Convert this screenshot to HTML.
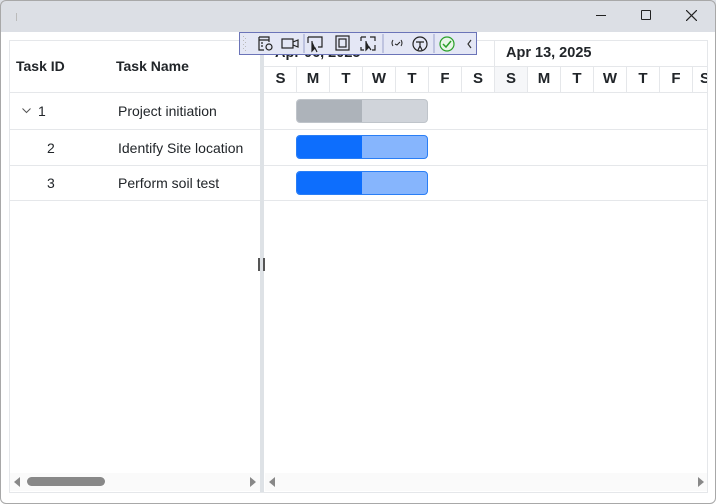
<!DOCTYPE html><html><head><style>
*{box-sizing:border-box;margin:0;padding:0}
body{width:716px;height:504px;background:#fff;font-family:"Segoe UI","Liberation Sans",sans-serif;position:relative;overflow:hidden;color:#212529}
.abs{position:absolute}
.tb{left:0;top:0;width:716px;height:32px;background:#dcdfe5}
.win{left:0;top:0;width:716px;height:504px;border:1px solid #a8a8a8;border-radius:6px;pointer-events:none}
.hl{background:#e5e7ea;height:1px}
.vl{background:#e5e7ea;width:1px}
.day{top:66px;width:33px;height:26px;text-align:center;font-weight:bold;font-size:15px;line-height:26px;border-left:1px solid #e5e7ea}
.cell{font-size:14px;line-height:20px}
.hd{font-weight:bold;font-size:14px}
</style></head><body>
<div class="abs tb"></div>
<div class="abs" style="left:16px;top:13px;width:1px;height:8px;background:#bbb"></div>
<div class="abs" style="left:596px;top:15px;width:10px;height:1px;background:#222"></div>
<div class="abs" style="left:641px;top:10px;width:10px;height:10px;border:1px solid #222;border-radius:1px"></div>
<svg class="abs" style="left:686px;top:10px" width="11" height="11"><path d="M0 0L11 11M11 0L0 11" stroke="#222" stroke-width="1.2"/></svg>

<div class="abs" style="left:9px;top:40px;width:699px;height:453px;border:1px solid #e5e7ea"></div>
<div class="abs" style="left:494px;top:66px;width:33px;height:26px;background:#f6f7f9"></div>
<div class="abs hl" style="left:10px;top:92px;width:697px"></div>
<div class="abs hl" style="left:264px;top:66px;width:443px"></div>
<div class="abs hl" style="left:10px;top:129px;width:697px"></div>
<div class="abs hl" style="left:10px;top:165px;width:697px"></div>
<div class="abs hl" style="left:10px;top:200px;width:697px"></div>
<div class="abs vl" style="left:494px;top:40px;height:26px"></div>
<div class="abs" style="left:260px;top:40px;width:4px;height:452px;background:#dee2e6"></div>
<div class="abs" style="left:258px;top:258px;width:2px;height:13px;background:#555"></div>
<div class="abs" style="left:263px;top:258px;width:2px;height:13px;background:#555"></div>

<div class="abs hd" style="left:16px;top:58px">Task ID</div>
<div class="abs hd" style="left:116px;top:58px">Task Name</div>
<div class="abs hd" style="left:275px;top:45px;font-size:14.5px">Apr 06, 2025</div>
<div class="abs hd" style="left:506px;top:45px;font-size:14.5px">Apr 13, 2025</div>

<div class="abs day" style="left:264px;border-left:none">S</div>
<div class="abs day" style="left:296px">M</div>
<div class="abs day" style="left:329px">T</div>
<div class="abs day" style="left:362px">W</div>
<div class="abs day" style="left:395px">T</div>
<div class="abs day" style="left:428px">F</div>
<div class="abs day" style="left:461px">S</div>
<div class="abs day" style="left:494px">S</div>
<div class="abs day" style="left:527px">M</div>
<div class="abs day" style="left:560px">T</div>
<div class="abs day" style="left:593px">W</div>
<div class="abs day" style="left:626px">T</div>
<div class="abs day" style="left:659px">F</div>
<div class="abs day" style="left:692px;width:15px;overflow:hidden;text-align:left;padding-left:7px">S</div>

<svg class="abs" style="left:22px;top:108px" width="9" height="6"><path d="M0.5 0.5L4.5 4.5L8.5 0.5" stroke="#555" fill="none"/></svg>
<div class="abs cell" style="left:38px;top:101px">1</div>
<div class="abs cell" style="left:118px;top:101px">Project initiation</div>
<div class="abs cell" style="left:47px;top:138px">2</div>
<div class="abs cell" style="left:118px;top:138px">Identify Site location</div>
<div class="abs cell" style="left:47px;top:173px">3</div>
<div class="abs cell" style="left:118px;top:173px">Perform soil test</div>

<div class="abs" style="left:296px;top:99px;width:132px;height:24px;border-radius:4px;overflow:hidden;background:#d0d4da;border:1px solid #bfc4ca"><div style="width:65px;height:100%;background:#adb3ba"></div></div>
<div class="abs" style="left:296px;top:135px;width:132px;height:24px;border-radius:4px;overflow:hidden;background:#86b5fd;border:1px solid #2a7ef5"><div style="width:65px;height:100%;background:#0d6efd"></div></div>
<div class="abs" style="left:296px;top:171px;width:132px;height:24px;border-radius:4px;overflow:hidden;background:#86b5fd;border:1px solid #2a7ef5"><div style="width:65px;height:100%;background:#0d6efd"></div></div>

<div class="abs" style="left:10px;top:473px;width:250px;height:18px;background:#fafafa"></div>
<div class="abs" style="left:265px;top:473px;width:442px;height:18px;background:#fafafa"></div>
<svg class="abs" style="left:13px;top:477px" width="8" height="10"><path d="M7 0V10L1 5Z" fill="#888"/></svg>
<div class="abs" style="left:27px;top:477px;width:78px;height:9px;border-radius:5px;background:#888"></div>
<svg class="abs" style="left:249px;top:477px" width="8" height="10"><path d="M1 0V10L7 5Z" fill="#888"/></svg>
<svg class="abs" style="left:268px;top:477px" width="8" height="10"><path d="M7 0V10L1 5Z" fill="#888"/></svg>
<svg class="abs" style="left:697px;top:477px" width="8" height="10"><path d="M1 0V10L7 5Z" fill="#888"/></svg>

<div class="abs" style="left:239px;top:32px;width:238px;height:23px;background:#e4e7f5;border:1px solid #6b74b8">
<svg width="238" height="21" style="display:block">
<g fill="#bbb"><rect x="3" y="3" width="1" height="1"/><rect x="5" y="5" width="1" height="1"/><rect x="3" y="7" width="1" height="1"/><rect x="5" y="9" width="1" height="1"/><rect x="3" y="11" width="1" height="1"/><rect x="5" y="13" width="1" height="1"/><rect x="3" y="15" width="1" height="1"/><rect x="5" y="17" width="1" height="1"/></g>
<g stroke="#222" fill="none" stroke-width="1.2">
<path d="M19 4h10v5M19 4v13h5M19 7h10M21 10h2M21 13h2"/><circle cx="29" cy="14" r="3"/>
<rect x="42" y="6" width="11" height="9"/><path d="M53 9l5-2v7l-5-2"/>
<path d="M68 4h14v10h-4M68 4v6"/><path d="M72 8l0 10l3-3l2 4" fill="#222"/>
<rect x="96" y="3" width="13" height="14"/><rect x="99" y="6" width="7" height="8"/>
<path d="M121 4h5M121 4v4M130 4h5v4M121 14v3h3M135 12v5h-3"/><path d="M126 8v9l3-3l2 3" fill="#222"/>
<path d="M153 7q-2 3 0 6M161 7q2 3 0 6M155 11l2 1 3-3" stroke-width="1"/>
<circle cx="180" cy="11" r="7"/><path d="M176 9h8M180 9v4M180 13l-2 4M180 13l2 4"/>
</g>
<line x1="64" y1="1" x2="64" y2="20" stroke="#9aa0cc"/>
<line x1="143" y1="1" x2="143" y2="20" stroke="#9aa0cc"/>
<line x1="194" y1="1" x2="194" y2="20" stroke="#9aa0cc"/>
<circle cx="207" cy="11" r="7" fill="#e8f6e8" stroke="#2aa02a" stroke-width="1.2"/><path d="M203 11l3 3 5-6" stroke="#2aa02a" fill="none" stroke-width="1.5"/>
<path d="M231 7l-3 4 3 4" stroke="#333" fill="none" stroke-width="1.2"/>
</svg></div>
<div class="abs win"></div>
</body></html>
